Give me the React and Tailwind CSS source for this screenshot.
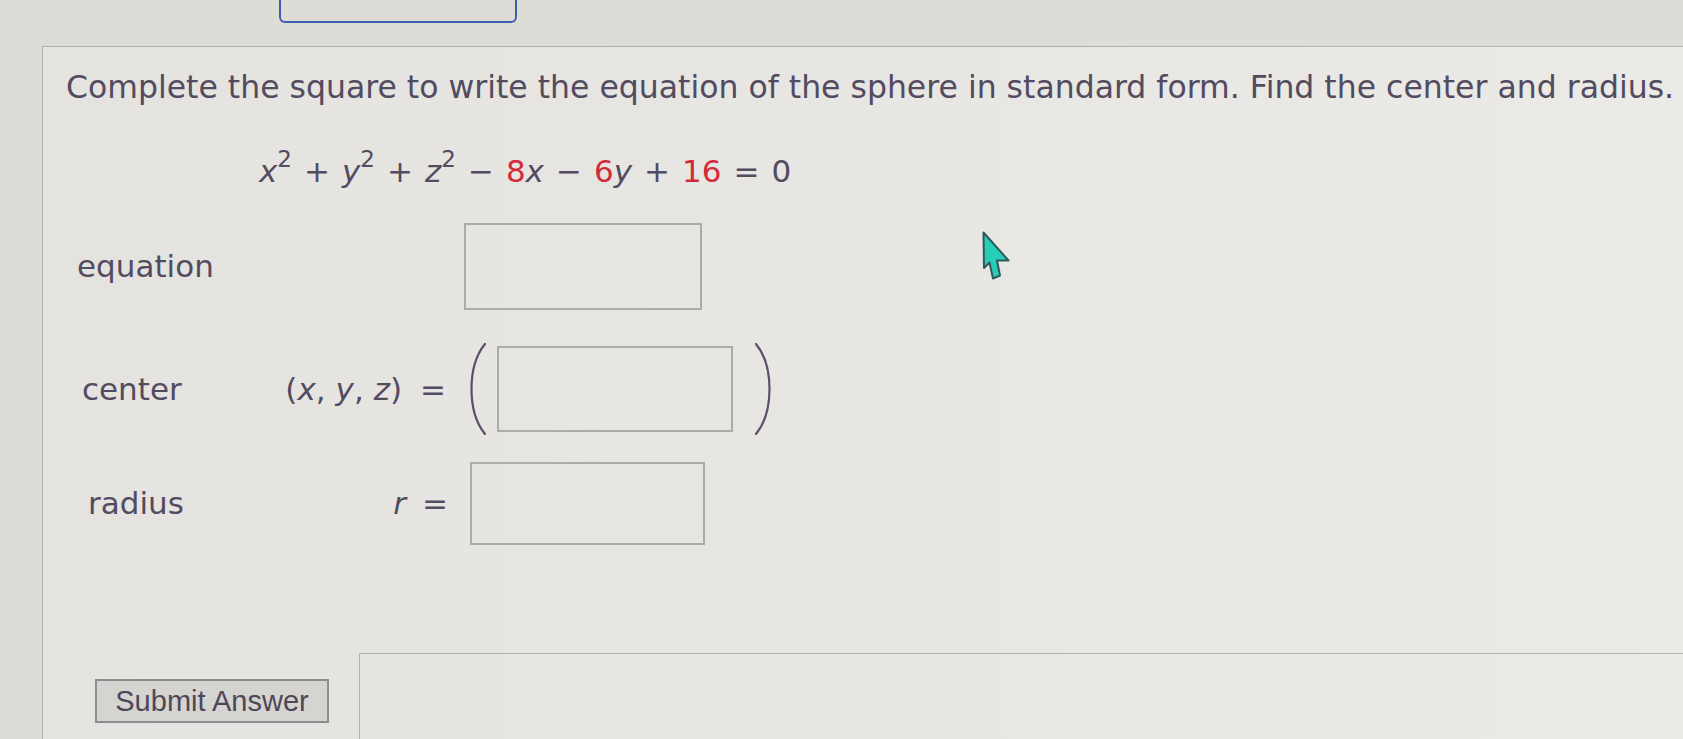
import React from 'react'

function Paren({ flip }) {
  return (
    <svg width="22" height="94" viewBox="0 0 22 94" className={flip ? '-scale-x-100' : ''}>
      <path d="M20 2 C 2 24, 2 70, 20 92" fill="none" stroke="#5b4f6b" strokeWidth="2.2" strokeLinecap="round" />
    </svg>
  )
}

function Cursor() {
  return (
    <svg width="30" height="50" viewBox="0 0 30 50">
      <path
        d="M1.5 1.5 L2 37 L7.5 31.5 L11 47.5 L18 44.5 L15 29.5 L26.5 29.5 Z"
        fill="#27cdb5"
        stroke="#2d5b5c"
        strokeWidth="2"
        strokeLinejoin="round"
      />
    </svg>
  )
}

function Op({ children }) {
  return <span className="px-[12px]">{children}</span>
}

function Sup({ children }) {
  return <span className="relative -top-[15px] text-[23px]">{children}</span>
}

export default function App() {
  return (
    <div className="relative h-[739px] w-full overflow-hidden bg-[#dddcd7] font-['DejaVu_Sans',sans-serif] text-[#534b5f]">
      {/* top tab edge */}
      <div className="h-[46px] pl-[279px]">
        <div className="h-[23px] w-[238px] rounded-b-[6px] border-2 border-t-0 border-[#3c5fae]" />
      </div>

      {/* question panel */}
      <div className="ml-[42px] h-full border-l border-t border-[#b4b2ae] bg-linear-to-r from-[#e4e3df] to-[#ebeae6] pl-[23px] pt-[22px]">
        <p className="text-[31.5px] leading-[37px] whitespace-nowrap">
          Complete the square to write the equation of the sphere in standard form. Find the center and radius.
        </p>

        <div className="mt-[47px] pl-[193px] text-[31px] leading-[37px] whitespace-nowrap">
          <span className="italic">x</span><Sup>2</Sup>
          <Op>+</Op>
          <span className="italic">y</span><Sup>2</Sup>
          <Op>+</Op>
          <span className="italic">z</span><Sup>2</Sup>
          <Op>−</Op>
          <span className="text-[#d42b3b]">8</span><span className="italic">x</span>
          <Op>−</Op>
          <span className="text-[#d42b3b]">6</span><span className="italic">y</span>
          <Op>+</Op>
          <span className="text-[#d42b3b]">16</span>
          <Op>=</Op>
          <span>0</span>
        </div>

        {/* equation row */}
        <div className="mt-[30px] flex items-center text-[31px] leading-[37px]">
          <div className="w-[398px] pl-[11px]">equation</div>
          <div className="h-[87px] w-[238px] border-2 border-[#adaba8]" />
        </div>

        {/* center row */}
        <div className="mt-[32px] flex items-center text-[31px] leading-[37px]">
          <div className="flex w-[380px] items-center pl-[16px]">
            <span>center</span>
            <span className="ml-auto whitespace-nowrap">
              (<span className="italic">x</span>, <span className="italic">y</span>, <span className="italic">z</span>)
              <span className="ml-[18px]">=</span>
            </span>
          </div>
          <div className="ml-[19px]"><Paren /></div>
          <div className="ml-[10px] h-[86px] w-[236px] border-2 border-[#adaba8]" />
          <div className="ml-[21px]"><Paren flip /></div>
        </div>

        {/* radius row */}
        <div className="mt-[26px] flex items-center text-[31px] leading-[37px]">
          <div className="flex w-[382px] items-center pl-[22px]">
            <span>radius</span>
            <span className="ml-auto whitespace-nowrap">
              <span className="italic">r</span>
              <span className="ml-[16px]">=</span>
            </span>
          </div>
          <div className="ml-[22px] h-[83px] w-[235px] border-2 border-[#adaba8]" />
        </div>

        {/* submit area */}
        <div className="mt-[108px] flex items-start">
          <button className="ml-[29px] mt-[26px] h-[44px] w-[234px] border-2 border-[#8e8b91] bg-[#d5d4d0] font-['Liberation_Sans',sans-serif] text-[29px] leading-none text-[#4d4858]">
            Submit Answer
          </button>
          <div className="ml-[30px] h-[120px] flex-1 border-l border-t border-[#b4b2ae]" />
        </div>
      </div>

      <div className="absolute left-[982px] top-[231px]">
        <Cursor />
      </div>
    </div>
  )
}
